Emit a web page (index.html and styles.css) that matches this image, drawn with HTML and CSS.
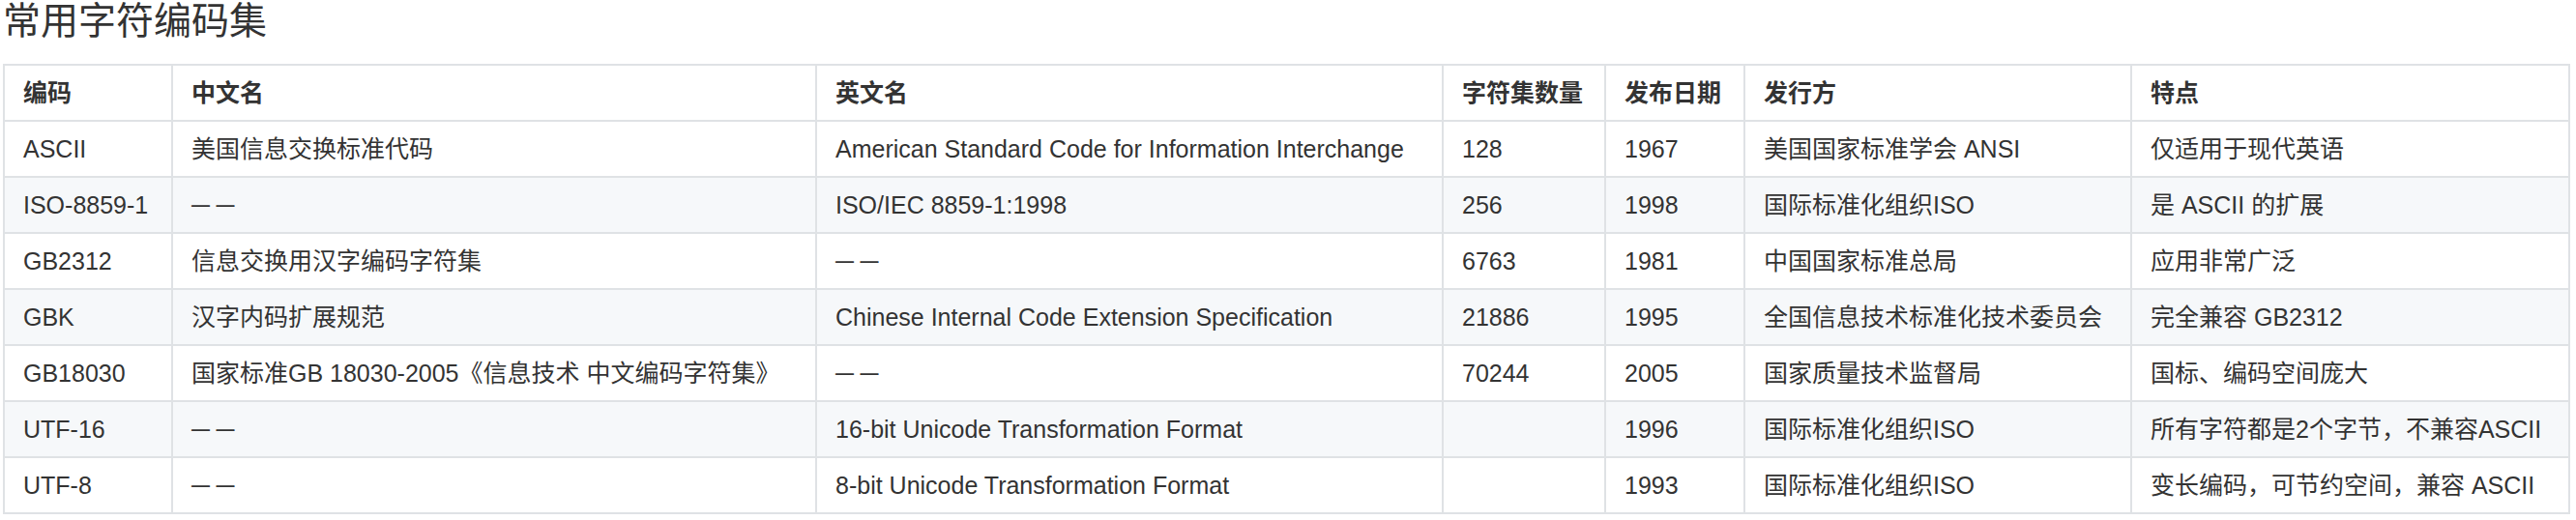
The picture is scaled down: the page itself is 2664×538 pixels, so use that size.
FILE: index.html
```html
<!DOCTYPE html>
<html lang="zh-CN">
<head>
<meta charset="utf-8">
<title>常用字符编码集</title>
<link rel="stylesheet" href="styles.css">
</head>
<body>
<div class="page">
  <h2 class="title">常用字符编码集</h2>
  <table class="charsets">
    <colgroup>
      <col class="c-code">
      <col class="c-zh">
      <col class="c-en">
      <col class="c-count">
      <col class="c-date">
      <col class="c-org">
      <col class="c-note">
    </colgroup>
    <thead>
      <tr>
        <th>编码</th>
        <th>中文名</th>
        <th>英文名</th>
        <th>字符集数量</th>
        <th>发布日期</th>
        <th>发行方</th>
        <th>特点</th>
      </tr>
    </thead>
    <tbody>
      <tr>
        <td>ASCII</td>
        <td>美国信息交换标准代码</td>
        <td>American Standard Code for Information Interchange</td>
        <td>128</td>
        <td>1967</td>
        <td>美国国家标准学会 ANSI</td>
        <td>仅适用于现代英语</td>
      </tr>
      <tr>
        <td>ISO-8859-1</td>
        <td><span class="dash">——</span></td>
        <td>ISO/IEC 8859-1:1998</td>
        <td>256</td>
        <td>1998</td>
        <td>国际标准化组织ISO</td>
        <td>是 ASCII 的扩展</td>
      </tr>
      <tr>
        <td>GB2312</td>
        <td>信息交换用汉字编码字符集</td>
        <td><span class="dash">——</span></td>
        <td>6763</td>
        <td>1981</td>
        <td>中国国家标准总局</td>
        <td>应用非常广泛</td>
      </tr>
      <tr>
        <td>GBK</td>
        <td>汉字内码扩展规范</td>
        <td>Chinese Internal Code Extension Specification</td>
        <td>21886</td>
        <td>1995</td>
        <td>全国信息技术标准化技术委员会</td>
        <td>完全兼容 GB2312</td>
      </tr>
      <tr>
        <td>GB18030</td>
        <td>国家标准GB 18030-2005《信息技术 中文编码字符集》</td>
        <td><span class="dash">——</span></td>
        <td>70244</td>
        <td>2005</td>
        <td>国家质量技术监督局</td>
        <td>国标、编码空间庞大</td>
      </tr>
      <tr>
        <td>UTF-16</td>
        <td><span class="dash">——</span></td>
        <td>16-bit Unicode Transformation Format</td>
        <td></td>
        <td>1996</td>
        <td>国际标准化组织ISO</td>
        <td>所有字符都是2个字节，不兼容ASCII</td>
      </tr>
      <tr>
        <td>UTF-8</td>
        <td><span class="dash">——</span></td>
        <td>8-bit Unicode Transformation Format</td>
        <td></td>
        <td>1993</td>
        <td>国际标准化组织ISO</td>
        <td>变长编码，可节约空间，兼容 ASCII</td>
      </tr>
    </tbody>
  </table>
</div>
</body>
</html>
```

FILE: styles.css
```css
html, body {
  margin: 0;
  padding: 0;
  background: #ffffff;
}

body {
  font-family: "Liberation Sans", "Noto Sans CJK SC", sans-serif;
  color: #333333;
}

.page {
  padding: 0 0 0 3px;
}

.title {
  margin: 0;
  font-size: 39px;
  font-weight: normal;
  line-height: 44px;
  color: #333333;
  height: 44px;
  margin-bottom: 22px;
}

.charsets {
  border-collapse: collapse;
  border-spacing: 0;
  table-layout: fixed;
  width: 2653px;
  font-size: 25px;
}

.c-code { width: 174px; }
.c-zh { width: 666px; }
.c-en { width: 648px; }
.c-count { width: 168px; }
.c-date { width: 144px; }
.c-org { width: 400px; }
.c-note { width: 453px; }

.charsets tr {
  height: 58px;
}

.charsets th,
.charsets td {
  border: 2px solid #dfe2e5;
  padding: 0 19px;
  line-height: 28px;
  text-align: left;
  white-space: nowrap;
  vertical-align: middle;
}

.charsets th {
  font-weight: bold;
}

.charsets tbody tr:nth-child(even) {
  background: #f6f8fa;
}

.dash {
  font-family: "Liberation Sans", sans-serif;
  font-size: 19px;
  font-weight: bold;
  letter-spacing: 6.5px;
  vertical-align: 3px;
}
```
